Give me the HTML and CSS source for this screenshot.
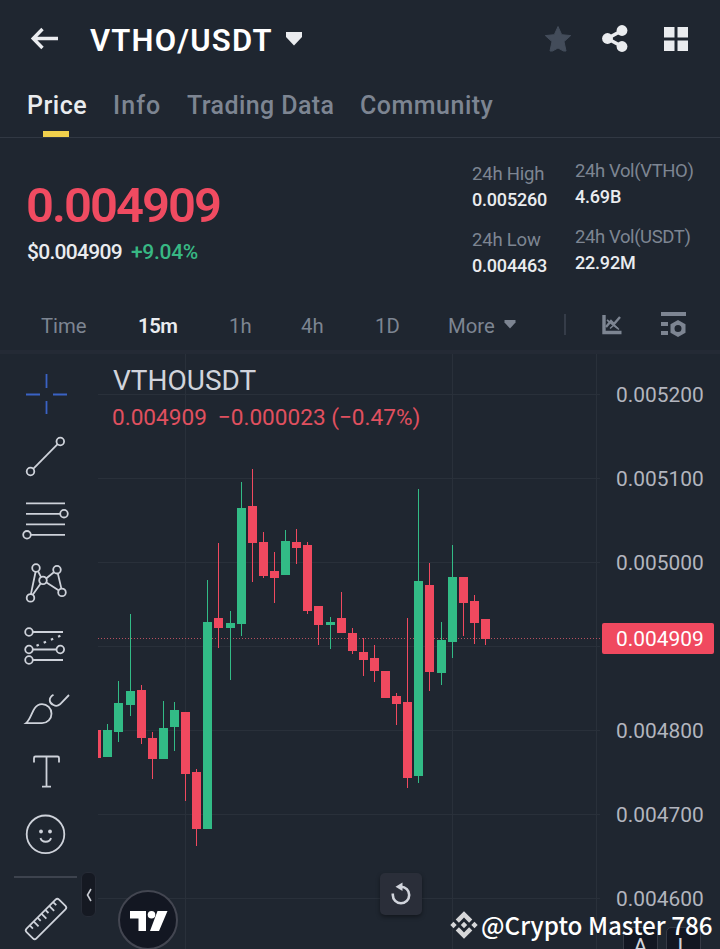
FILE: index.html
```html
<!DOCTYPE html>
<html lang="en">
<head>
  <meta charset="UTF-8" />
  <title>VTHO/USDT</title>
  <link rel="stylesheet" href="styles.css">
</head>
<body>
  <header class="topbar">
    <svg class="back" width="28" height="24" viewBox="0 0 28 24"><path d="M28 11.500H4M12.500 2L3.200 11.500l9.300 9.500" fill="none" stroke="#eaecef" stroke-width="3.400"/></svg>
    <h1>VTHO/USDT</h1>
    <svg class="caret" width="18" height="14" viewBox="0 0 18 14"><path d="M1 0h16v5L9 13.500 1 5z" fill="#eaecef"/></svg>
    <div class="actions">
      <svg width="28" height="28" viewBox="0 0 28 28"><path d="M14 1.500l3.700 8.200 9 .9-6.700 6 2 9.400H19.500L14 23l-5.500 3H6l2-9.400-6.700-6 9-.9z" fill="#434c5a" stroke="#434c5a" stroke-linejoin="round"/></svg>
      <svg width="28" height="28" viewBox="0 0 28 28"><path d="M20 5.500L5.500 13.500 20 21.500" fill="none" stroke="#eaecef" stroke-width="3.600"/><g fill="#eaecef"><circle cx="20" cy="5.500" r="5.400"/><circle cx="5.500" cy="13.500" r="5.400"/><circle cx="20" cy="21.500" r="5.400"/></g></svg>
      <svg width="24" height="24" viewBox="0 0 24 24"><path d="M0 0h10.500v10.500H0zM13.500 0H24v10.500H13.500zM0 13.500h10.500V24H0zM13.500 13.500H24V24H13.500z" fill="#eaecef"/></svg>
    </div>
  </header>

  <nav class="tabs">
    <a class="tab active">Price</a>
    <a class="tab info">Info</a>
    <a class="tab trading">Trading Data</a>
    <a class="tab community">Community</a>
  </nav>

  <section class="summary">
    <div class="quote">
      <div class="price">0.004909</div>
      <div class="sub"><span class="usd">$0.004909</span><span class="change">+9.04%</span></div>
    </div>
    <dl class="stats">
      <dt>24h High</dt>
      <dd>0.005260</dd>
      <dt>24h Low</dt>
      <dd>0.004463</dd>
    </dl>
    <dl class="stats volume">
      <dt>24h Vol(VTHO)</dt>
      <dd>4.69B</dd>
      <dt>24h Vol(USDT)</dt>
      <dd>22.92M</dd>
    </dl>
  </section>

  <nav class="intervals">
    <span>Time</span>
    <span class="active">15m</span>
    <span>1h</span>
    <span>4h</span>
    <span>1D</span>
    <span class="more">More <svg width="12" height="9" viewBox="0 0 12 9"><path d="M.5 0h11v2.500L6 8.500.5 2.500z" fill="#7d8592"/></svg></span>
    <i class="sep"></i>
    <svg width="20" height="20" viewBox="0 0 20 20"><g fill="none" stroke="#7d8592"><path d="M2 0v17.500H19.500" stroke-width="3.400"/><path d="M4 12l5-6 3 3 6-7" stroke-width="2.400"/><path d="M5 5l7 5.500 5 4" stroke-width="1.600"/><path d="M8 13.500l4-3.500 4 3.500" stroke-width="1.400"/></g></svg>
    <svg width="26" height="26" viewBox="0 0 26 26"><g fill="#7d8592"><path d="M0 0h25v4H0zM0 10h7v4H0zM0 19h7v4H0z"/><path fill-rule="evenodd" d="M17 8l7.500 4.200v8.600L17 25l-7.500-4.200v-8.600zM17 13a3.500 3.500 0 1 0 0 7 3.500 3.500 0 0 0 0-7z"/></g></svg>
  </nav>

  <main class="chart">
    <aside class="tools">
      <svg class="cross" viewBox="-30 -30 60 60"><path d="M.5-20v14M.5 7v13M-20 .5h14M7 .5h14"/></svg>
      <svg viewBox="-30 -30 60 60"><path d="M-12.800 11.800L11.600-12.800"/><circle cx="-15.500" cy="14.500" r="3.800"/><circle cx="14.300" cy="-15.500" r="3.800"/></svg>
      <svg viewBox="-30 -30 60 60"><path d="M-20-16.700h39M-20-6.200h34M-20 4.300h39M-15 14.800h34"/><circle cx="18" cy="-6.300" r="3.800"/><circle cx="-19" cy="14.800" r="3.800"/></svg>
      <svg viewBox="-30 -30 60 60"><path d="M-10.400-11.200l-4.700 22.300M-8-11.800l3 5.900M.4-4.700l7.500-6M11.800-9.600l3.600 15.200M.5-.5l12 7.700M-5.300.5l-8 11.200"/><circle cx="-10" cy="-15" r="3.800"/><circle cx="11" cy="-13.300" r="3.800"/><circle cx="-3" cy="-2.600" r="3.800"/><circle cx="-15.500" cy="14.900" r="3.800"/><circle cx="16" cy="9.400" r="3.800"/></svg>
      <svg viewBox="-30 -30 60 60"><path d="M-13-13h30M-13 4.500h23.500M-13 15h30"/><path d="M-9.500.8L16-10" stroke-width="2.200" stroke-dasharray="2.500 5.300"/><circle cx="-17" cy="-13" r="3.800"/><circle cx="-17" cy="4.500" r="3.800"/><circle cx="14.300" cy="4.500" r="3.800"/><circle cx="-17" cy="15" r="3.800"/></svg>
      <svg viewBox="-30 -30 60 60"><path d="M-20 15.200C-16 12-14 4-11.500.5-9.500-2.500-7-3.800-4-3.800A9.500 9.500 0 0 1-4 15.200zM7.500-13.200C2-10 3-5 7.500-3c2.500 1.400 4.500 1 6.500-.7l9-9.300"/></svg>
      <svg viewBox="-30 -30 60 60"><path d="M-12-8.500v-4.500q0-1.500 1.500-1.500h22q1.500 0 1.500 1.500v4.500M.5-14.500v30M-4 15.700h9"/></svg>
      <svg viewBox="-30 -30 60 60"><circle cx="-.5" cy=".3" r="18.800"/><path d="M-5.500 4c1.200 5 9.300 5 10.500 0"/><circle class="dot" cx="-5" cy="-2.500" r="1.900"/><circle class="dot" cx="4" cy="-2.500" r="1.900"/></svg>
      <hr>
      <svg class="ruler" viewBox="-30 -30 60 60"><rect x="-23" y="-7" width="46" height="14" rx="2.500" transform="rotate(-45)"/><path transform="rotate(-45)" d="M-16-7v4.500M-10.500-7v7M-5-7v4.500M.5-7v7M6-7v4.500M11.500-7v7M17-7v4.500"/></svg>
    </aside>

    <div class="plot">
      <svg id="candles" class="candles" width="504" height="595" viewBox="98 354 504 595"></svg>
      <div class="legend">
        <div class="symbol">VTHOUSDT</div>
        <div class="values"><span>0.004909</span><span>−0.000023 (−0.47%)</span></div>
      </div>
      <div class="handle"><svg width="6" height="14" viewBox="0 0 6 14"><path d="M5 1L1.500 7 5 13" fill="none" stroke="#c9ccd3" stroke-width="1.600"/></svg></div>
      <div class="tv"><svg width="38" height="20" viewBox="0 0 38 20"><path d="M0 0h16v20H8.500V7.500H0zM27.500 0H37.500L29 20h-9z" fill="#fff"/><circle cx="21.500" cy="3.800" r="3.800" fill="#fff"/></svg></div>
      <div class="reset"><svg width="20" height="24" viewBox="0 0 20 24"><path d="M1.800 11.500v1.500a8.200 8.200 0 1 0 8.200-8.200" fill="none" stroke="#d1d4dc" stroke-width="2.600"/><path d="M4.500 4.800L11.500.5v8.500z" fill="#d1d4dc"/></svg></div>
    </div>

    <div class="axis">
      <span>0.005200</span>
      <span>0.005100</span>
      <span>0.005000</span>
      <span></span>
      <span>0.004800</span>
      <span>0.004700</span>
      <span>0.004600</span>
      <div class="last">0.004909</div>
      <div class="scale"><b>A</b><b>L</b></div>
    </div>

    <div class="watermark">
      <svg width="28" height="28" viewBox="0 0 28 28"><g fill="#d6d7d9"><path d="M14 .2l8.300 8.300-3.200 3.200L14 6.600l-5.100 5.100-3.200-3.200zM14 27.800l8.300-8.300-3.200-3.200-5.100 5.100-5.100-5.100-3.200 3.200zM3.500 10.800L6.700 14l-3.200 3.200L.3 14zM24.500 10.800l3.200 3.200-3.200 3.200-3.200-3.200zM14 10.800l3.200 3.200-3.200 3.200-3.200-3.200z"/></g></svg>
      <span>@Crypto Master 786</span>
    </div>
  </main>

  <script>
    const svg = document.getElementById("candles");
    const UP = "#32bb86";
    const DOWN = "#f0495f";

    // left, wick top, body top, body bottom, wick bottom, up
    const candles = [
      [103, 724, 730, 757, 757, 1],
      [114, 681, 703, 732, 742, 1],
      [126, 614, 691, 705, 716, 1],
      [137, 685, 690, 738, 744, 0],
      [148, 732, 738, 759, 779, 0],
      [159, 701, 728, 759, 759, 1],
      [170, 702, 710, 727, 751, 1],
      [181, 712, 712, 774, 801, 0],
      [192, 769, 772, 829, 846, 0],
      [203, 580, 622, 829, 829, 1],
      [214, 543, 618, 628, 648, 0],
      [226, 611, 623, 628, 680, 1],
      [237, 482, 508, 624, 636, 1],
      [248, 469, 506, 543, 582, 0],
      [259, 532, 542, 576, 578, 0],
      [270, 552, 571, 578, 603, 0],
      [281, 530, 541, 575, 575, 1],
      [292, 529, 542, 548, 564, 0],
      [303, 542, 545, 611, 614, 0],
      [314, 606, 606, 625, 645, 0],
      [326, 617, 622, 625, 649, 1],
      [337, 592, 618, 633, 633, 0],
      [348, 628, 633, 651, 654, 0],
      [359, 638, 652, 660, 676, 0],
      [370, 645, 658, 671, 682, 0],
      [381, 671, 671, 698, 698, 0],
      [392, 693, 696, 704, 725, 0],
      [403, 618, 702, 778, 788, 0],
      [414, 489, 581, 776, 783, 1],
      [425, 563, 585, 672, 691, 0],
      [437, 622, 640, 673, 685, 1],
      [448, 545, 577, 642, 658, 1],
      [459, 577, 577, 603, 636, 0],
      [470, 595, 601, 623, 644, 0],
      [481, 619, 619, 639, 645, 0]
    ];

    let out = "";
    [394, 478, 562, 646, 730, 814, 898].forEach(y => {
      out += `<rect x="98" y="${y}" width="502" height="1" fill="#29303a"/>`;
    });
    [185, 452, 596].forEach(x => {
      out += `<rect x="${x}" y="354" width="1" height="595" fill="#29303a"/>`;
    });
    out += `<path d="M98 638.5H602" stroke="#b8505f" stroke-dasharray="1 2"/>`;
    out += `<rect x="98" y="730" width="3" height="28" fill="${DOWN}"/>`;
    candles.forEach(([x, high, top, bottom, low, up]) => {
      const color = up ? UP : DOWN;
      out += `<rect x="${x + 4}" y="${high}" width="1" height="${low - high}" fill="${color}"/>`;
      out += `<rect x="${x}" y="${top}" width="9" height="${bottom - top}" fill="${color}"/>`;
    });
    svg.innerHTML = out;
  </script>
</body>
</html>
```

FILE: styles.css
```css
* {
  box-sizing: border-box;
}

body {
  margin: 0;
  width: 720px;
  height: 949px;
  overflow: hidden;
  background: #1f2630;
  color: #eaecef;
  font-family: Roboto, "Noto Sans", sans-serif;
  white-space: nowrap;
}

svg {
  display: block;
  flex: none;
}

/* header */
.topbar {
  display: flex;
  align-items: center;
  height: 78px;
  padding: 0 32px 0 30px;
}

h1 {
  margin: 2px 0 0 32px;
  width: 181px;
  color: #fff;
  font-size: 31px;
  font-weight: 600;
  letter-spacing: 1.2px;
}

.caret {
  margin-left: 14px;
}

.actions {
  display: flex;
  align-items: center;
  margin-left: auto;
  gap: 29px;
}

.actions svg:first-child {
  margin-right: 1px;
}

.actions svg:last-child {
  margin-left: 5px;
}

.tabs {
  display: flex;
  height: 60px;
  padding-left: 27px;
  border-bottom: 1px solid #313843;
  font-size: 25px;
  font-weight: 500;
  line-height: 56px;
  color: #7d8592;
}

.tab {
  position: relative;
  width: 86px;
  letter-spacing: 0.5px;
}

.tab.active {
  color: #eaecef;
}

.tab.active::after {
  content: "";
  position: absolute;
  left: 16px;
  bottom: 0;
  width: 26px;
  height: 6px;
  background: #f0d04c;
}

.tab.info {
  width: 74px;
  letter-spacing: 1.1px;
}

.tab.trading {
  width: 173px;
  letter-spacing: 0.4px;
}

/* price summary */
.summary {
  display: flex;
  height: 162px;
  padding-left: 27px;
}

.quote {
  width: 445px;
  padding-top: 39px;
}

.price {
  height: 60px;
  margin-left: -1px;
  line-height: 58px;
  font-size: 49px;
  font-weight: 600;
  letter-spacing: -2px;
  color: #f04b61;
}

.sub {
  display: flex;
  line-height: 30px;
  font-size: 21px;
  font-weight: 500;
  letter-spacing: -0.7px;
}

.usd {
  width: 104px;
}

.change {
  letter-spacing: -0.3px;
  color: #38b884;
}

.stats {
  width: 103px;
  margin: 0;
  padding-top: 23px;
  font-size: 18.5px;
}

.stats.volume {
  padding-top: 20px;
}

.stats dt {
  height: 26px;
  line-height: 26px;
  letter-spacing: -0.2px;
  color: #7d8592;
}

.stats.volume dt {
  letter-spacing: -0.4px;
}

.stats dd {
  height: 40px;
  margin: 0;
  line-height: 26px;
  font-weight: 500;
  font-size: 18px;
  letter-spacing: -0.2px;
}

.intervals {
  display: grid;
  grid-template-columns: 97px 91px 72px 74px 73px 116px 38px 59px 26px;
  align-items: center;
  height: 54px;
  padding: 1px 0 0 41px;
  border-bottom: 4px solid #242a35;
  font-size: 20.3px;
  color: #7d8592;
}

.intervals .active {
  color: #eaecef;
  font-weight: 600;
  letter-spacing: -0.4px;
}

.more {
  display: flex;
  align-items: center;
  gap: 9px;
}

.more svg {
  margin-top: -3px;
}

.sep {
  width: 2px;
  height: 21px;
  margin-top: -2px;
  background: #353c48;
}

.intervals > svg {
  margin-top: -2px;
}

/* chart */
.chart {
  position: relative;
  display: flex;
  height: 595px;
}

.tools {
  display: flex;
  flex-direction: column;
  gap: 2.85px;
  width: 98px;
  padding: 10px 0 0 16px;
}

.tools svg {
  width: 60px;
  height: 60px;
  fill: none;
  stroke: #ced2da;
  stroke-width: 1.8;
}

.tools .cross {
  stroke: #3a62c4;
}

.tools .dot {
  fill: #ced2da;
  stroke: none;
}

.tools hr {
  flex: none;
  width: 63px;
  height: 2px;
  margin: 9px 0 8px -2px;
  border: 0;
  background: #3d434e;
}

.plot {
  position: relative;
  width: 504px;
}

.legend {
  position: absolute;
  left: 15px;
  top: 8px;
}

.symbol {
  line-height: 38px;
  font-size: 28px;
  color: #d1d4dc;
}

.values {
  display: flex;
  gap: 11px;
  margin-left: -1px;
  line-height: 36px;
  font-size: 22.6px;
  color: #e0505f;
}

.handle,
.tv,
.reset {
  position: absolute;
  display: flex;
  align-items: center;
  justify-content: center;
}

.handle {
  left: -17px;
  top: 518px;
  width: 15px;
  height: 45px;
  border: 1px solid #262b36;
  border-radius: 6px;
  background: #151922;
}

.tv {
  left: 20px;
  top: 536px;
  width: 60px;
  height: 60px;
  border: 2px solid #434651;
  border-radius: 50%;
  background: #131722;
}

.tv svg {
  margin: 2px 0 0 1px;
}

.reset {
  left: 282px;
  top: 519px;
  width: 42px;
  height: 42px;
  border-radius: 5px;
  background: #2a2e39;
  box-shadow: 0 2px 4px #0006;
}

.axis {
  position: relative;
  width: 118px;
  font-size: 20.9px;
  color: #b2b5be;
}

.axis span {
  display: block;
  height: 84px;
  padding-left: 14px;
  line-height: 82px;
}

.last {
  position: absolute;
  left: 0;
  top: 269px;
  width: 112px;
  height: 31px;
  padding-left: 14px;
  line-height: 32px;
  border-radius: 2px;
  background: #f0495f;
  color: #fff;
}

.scale {
  position: absolute;
  left: 21px;
  top: 573px;
  display: flex;
  gap: 8px;
}

.scale b {
  width: 35px;
  height: 34px;
  border: 1px solid #363a45;
  border-radius: 5px;
  background: #131722;
  font-size: 22px;
  font-weight: 400;
  line-height: 37px;
  text-align: center;
  color: #d1d4dc;
}

.watermark {
  position: absolute;
  left: 450px;
  top: 552px;
  display: flex;
  align-items: center;
  gap: 3px;
  height: 38px;
  color: #fff;
  font-family: "Noto Sans CJK SC", sans-serif;
  font-size: 24.2px;
  font-weight: 500;
}

.watermark span {
  margin-top: -2px;
}
```
